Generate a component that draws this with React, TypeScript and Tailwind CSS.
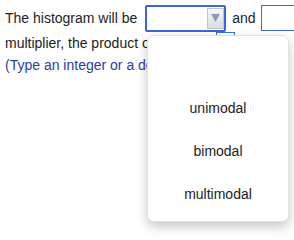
const OPTIONS = ['', 'unimodal', 'bimodal', 'multimodal']

function FakeSelect() {
  return (
    <div className="ml-[8px] flex h-[27px] w-[81px] shrink-0 items-center justify-end rounded-[2px] border-2 border-[#3a67d4] bg-white">
      <div className="flex h-[21px] w-[17px] items-center justify-center border border-[#c4c4c4] bg-gradient-to-b from-[#f6f6f6] to-[#dddddd]">
        <svg viewBox="0 0 10 9" className="h-[8px] w-[9px]" aria-hidden="true">
          <path d="M0 0h10L5 9z" fill="#8b9bb1" />
        </svg>
      </div>
    </div>
  )
}

export default function App() {
  return (
    <div
      className="relative h-[240px] w-[294px] overflow-hidden bg-white pl-[5px] pt-[4px] text-[14px] text-[#222222]"
      style={{ fontFamily: '"Liberation Sans", Arial, sans-serif' }}
    >
      {/* line 1 */}
      <div className="flex h-[28px] items-center whitespace-nowrap">
        <span className="shrink-0">The histogram will be</span>
        <FakeSelect />
        <span className="ml-[6px] shrink-0">and</span>
        <div className="ml-[5px] h-[26px] w-[60px] shrink-0 border border-[#3d6fd0] bg-white" />
      </div>

      {/* line 2 */}
      <div className="relative flex h-[22px] items-center whitespace-nowrap">
        <span>multiplier, the product of</span>
        <div className="absolute left-[211px] top-0 h-[22px] w-[19px] border border-[#3d6fd0] bg-white" />
      </div>

      {/* line 3 */}
      <div className="flex h-[22px] items-center whitespace-nowrap text-[#2b3ca6]">
        <span>(Type an integer or a decimal.)</span>
      </div>

      {/* open dropdown */}
      <div className="absolute left-[147px] top-[35px] w-[142px] rounded-[7px] border border-[#e2e2e2] bg-white pb-[5px] pt-[8px] shadow-[0_5px_12px_rgba(0,0,0,0.22)]">
        {OPTIONS.map((o, i) => (
          <div key={i} className="flex h-[43px] items-center justify-center text-[14px] text-[#222222]">
            {o}
          </div>
        ))}
      </div>
    </div>
  )
}
